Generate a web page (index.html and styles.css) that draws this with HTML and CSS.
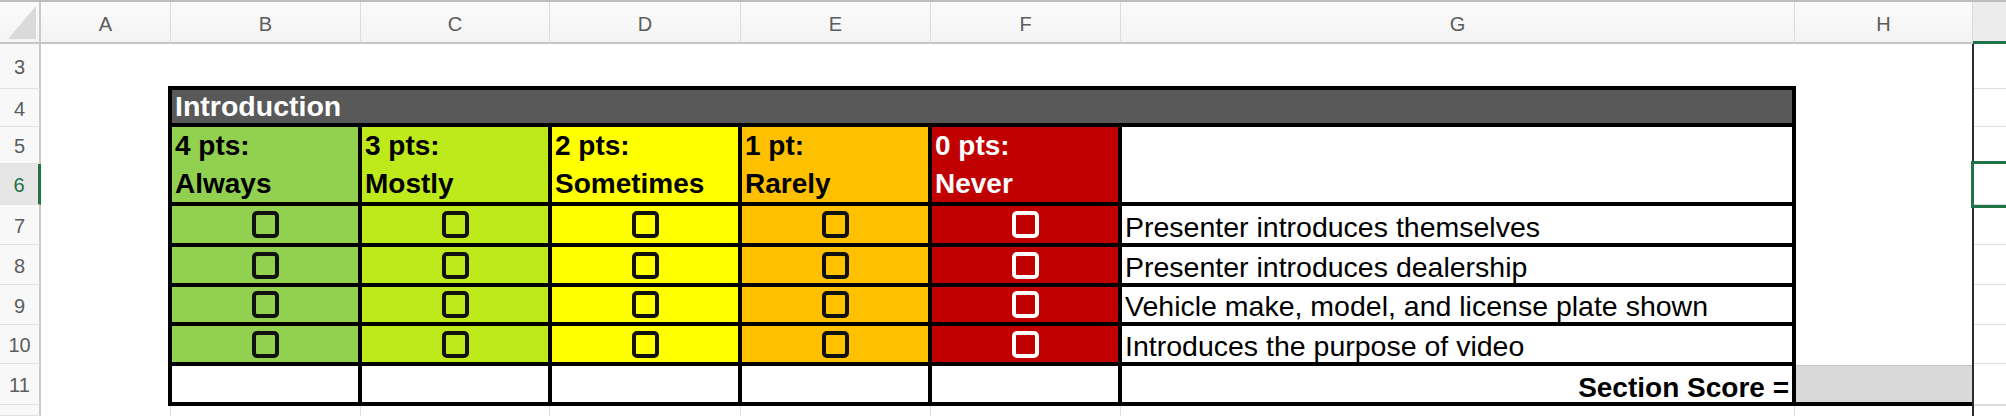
FILE: index.html
```html
<!DOCTYPE html>
<html lang="en">
<head>
<meta charset="utf-8">
<title>Introduction rubric</title>
<link rel="stylesheet" href="styles.css">
</head>
<body>
<div class="sheet">
  <div class="colhead">
    <div class="corner"><svg width="39" height="42" viewBox="0 0 39 42"><polygon points="36,4 36,37 8,37" fill="#dadada"/></svg></div>
    <div class="ch w-a">A</div>
    <div class="ch w-b">B</div>
    <div class="ch w-c">C</div>
    <div class="ch w-d">D</div>
    <div class="ch w-e">E</div>
    <div class="ch w-f">F</div>
    <div class="ch w-g">G</div>
    <div class="ch w-h">H</div>
    <div class="ch w-i sel"></div>
  </div>
  <div class="body">
    <div class="rowhead">
      <div class="rh h3">3</div>
      <div class="rh h4">4</div>
      <div class="rh h5">5</div>
      <div class="rh h6 sel">6</div>
      <div class="rh h7">7</div>
      <div class="rh h8">8</div>
      <div class="rh h9">9</div>
      <div class="rh h10">10</div>
      <div class="rh h11">11</div>
      <div class="rh h12"></div>
    </div>
    <div class="main">
      <div class="tablewrap">
        <div class="rubric">
          <div class="title">Introduction</div>
          <div class="hd c4">4 pts:<br>Always</div>
          <div class="hd c3">3 pts:<br>Mostly</div>
          <div class="hd c2">2 pts:<br>Sometimes</div>
          <div class="hd c1">1 pt:<br>Rarely</div>
          <div class="hd c0">0 pts:<br>Never</div>
          <div class="blank"></div>

          <div class="box c4"><span class="chk"></span></div>
          <div class="box c3"><span class="chk"></span></div>
          <div class="box c2"><span class="chk"></span></div>
          <div class="box c1"><span class="chk"></span></div>
          <div class="box c0"><span class="chk"></span></div>
          <div class="desc">Presenter introduces themselves</div>

          <div class="box c4"><span class="chk"></span></div>
          <div class="box c3"><span class="chk"></span></div>
          <div class="box c2"><span class="chk"></span></div>
          <div class="box c1"><span class="chk"></span></div>
          <div class="box c0"><span class="chk"></span></div>
          <div class="desc">Presenter introduces dealership</div>

          <div class="box c4"><span class="chk"></span></div>
          <div class="box c3"><span class="chk"></span></div>
          <div class="box c2"><span class="chk"></span></div>
          <div class="box c1"><span class="chk"></span></div>
          <div class="box c0"><span class="chk"></span></div>
          <div class="desc">Vehicle make, model, and license plate shown</div>

          <div class="box c4"><span class="chk"></span></div>
          <div class="box c3"><span class="chk"></span></div>
          <div class="box c2"><span class="chk"></span></div>
          <div class="box c1"><span class="chk"></span></div>
          <div class="box c0"><span class="chk"></span></div>
          <div class="desc">Introduces the purpose of video</div>

          <div class="blank"></div>
          <div class="blank"></div>
          <div class="blank"></div>
          <div class="blank"></div>
          <div class="blank"></div>
          <div class="total">Section Score =</div>
        </div>
        <div class="score"></div>
      </div>
      <div class="row12">
        <span class="g w-a"></span>
        <span class="g w-b"></span>
        <span class="g w-c"></span>
        <span class="g w-d"></span>
        <span class="g w-e"></span>
        <span class="g w-f"></span>
        <span class="g w-g"></span>
        <span class="g w-h2"></span>
      </div>
    </div>
    <div class="freeze"></div>
    <div class="icol">
      <div class="ic h3"></div>
      <div class="ic h4"></div>
      <div class="ic h5"></div>
      <div class="ic h6 isel"></div>
      <div class="ic h7"></div>
      <div class="ic h8"></div>
      <div class="ic h9"></div>
      <div class="ic h10"></div>
      <div class="ic h11"></div>
      <div class="ic h12"></div>
    </div>
  </div>
</div>
</body>
</html>
```

FILE: styles.css
```css
html, body {
  margin: 0;
  padding: 0;
}

body {
  font-family: "Liberation Sans", Arial, sans-serif;
  background: #ffffff;
  width: 2006px;
  height: 416px;
  overflow: hidden;
}

.sheet {
  width: 2006px;
  height: 416px;
  display: flex;
  flex-direction: column;
  overflow: hidden;
}

/* column header */
.colhead {
  display: flex;
  height: 44px;
  flex: none;
  box-sizing: border-box;
  border-top: 2px solid #bdbdbd;
  background: linear-gradient(#fbfbfb, #f3f3f3);
}

.corner {
  width: 41px;
  flex: none;
  box-sizing: border-box;
  border-right: 2px solid #cacaca;
  border-bottom: 2px solid #c6c6c6;
}

.corner svg {
  display: block;
}

.ch {
  flex: none;
  box-sizing: border-box;
  height: 42px;
  border-right: 1px solid #dcdcdc;
  border-bottom: 2px solid #c6c6c6;
  display: flex;
  align-items: center;
  justify-content: center;
  padding-top: 4px;
  font-size: 20px;
  color: #5c5c5c;
}

.ch.sel {
  border-bottom: 3px solid #217346;
  border-right: none;
  background: #ececec;
}

.w-a { width: 130px; }
.w-b { width: 190px; }
.w-c { width: 189px; }
.w-d { width: 191px; }
.w-e { width: 190px; }
.w-f { width: 190px; }
.w-g { width: 674px; }
.w-h { width: 178px; }
.w-h2 { width: 177px; }
.w-i { width: 33px; }

/* body */
.body {
  display: flex;
  flex: 1;
  min-height: 0;
}

.rowhead {
  width: 41px;
  flex: none;
  display: flex;
  flex-direction: column;
  background: #f8f8f8;
}

.rh {
  flex: none;
  box-sizing: border-box;
  border-right: 2px solid #cacaca;
  border-bottom: 1px solid #e2e2e2;
  display: flex;
  align-items: center;
  justify-content: center;
  padding-top: 3px;
  font-size: 20px;
  color: #5c5c5c;
  overflow: hidden;
}

.rh.sel {
  background: #e6e6e6;
  color: #217346;
  border-right: 3px solid #217346;
}

.h3 { height: 45px; }
.h4 { height: 38px; }
.h5 { height: 37px; }
.h6 { height: 41px; }
.h7 { height: 40px; }
.h8 { height: 40px; }
.h9 { height: 40px; }
.h10 { height: 39px; }
.h11 { height: 41px; }
.h12 { flex: 1; min-height: 0; }

.main {
  width: 1931px;
  flex: none;
  display: flex;
  flex-direction: column;
}

.tablewrap {
  display: flex;
  align-items: flex-end;
  margin: 42px 0 0 127px;
}

.rubric {
  display: grid;
  grid-template-columns: repeat(5, 186px) 670px;
  grid-template-rows: 33px 75px 37px 36px 35px 36px 36px;
  gap: 4px;
  padding: 4px;
  background: #000000;
}

.title {
  grid-column: 1 / -1;
  background: #595959;
  color: #ffffff;
  font-weight: bold;
  font-size: 28.5px;
  line-height: 33px;
  padding-left: 3px;
  white-space: nowrap;
}

.hd {
  font-weight: bold;
  font-size: 28px;
  line-height: 38px;
  padding-left: 3px;
  color: #000000;
  white-space: nowrap;
}

.c4 { background: #92d050; }
.c3 { background: #bee91b; }
.c2 { background: #ffff00; }
.c1 { background: #ffc000; }
.c0 { background: #c00000; color: #ffffff; }

.box {
  display: flex;
  align-items: center;
  justify-content: center;
}

.chk {
  display: block;
  width: 27px;
  height: 27px;
  box-sizing: border-box;
  border: 4px solid #111111;
  border-radius: 5px;
}

.c0 .chk {
  border-color: #ffffff;
}

.blank {
  background: #ffffff;
}

.desc {
  background: #ffffff;
  font-size: 28.5px;
  line-height: 32px;
  display: flex;
  align-items: flex-end;
  padding-left: 3px;
  white-space: nowrap;
  color: #000000;
}

.total {
  background: #ffffff;
  font-size: 28px;
  font-weight: bold;
  line-height: 28px;
  display: flex;
  align-items: flex-end;
  justify-content: flex-end;
  padding-right: 3px;
  white-space: nowrap;
  color: #000000;
}

.score {
  width: 176px;
  height: 36px;
  flex: none;
  border-top: 1px solid #c4c4c4;
  border-bottom: 4px solid #000000;
  background: #d9d9d9;
}

.row12 {
  display: flex;
  flex: 1;
}

.g {
  display: block;
  flex: none;
  box-sizing: border-box;
  border-right: 1px solid #dedede;
}

.g.w-h2 {
  border-right: none;
}

.freeze {
  width: 2px;
  flex: none;
  background: #2b2b2b;
}

.icol {
  flex: 1;
  display: flex;
  flex-direction: column;
}

.ic {
  flex: none;
  box-sizing: border-box;
  border-bottom: 1px solid #dedede;
}

.ic.isel {
  position: relative;
  z-index: 1;
  outline: 3px solid #217346;
}
```
